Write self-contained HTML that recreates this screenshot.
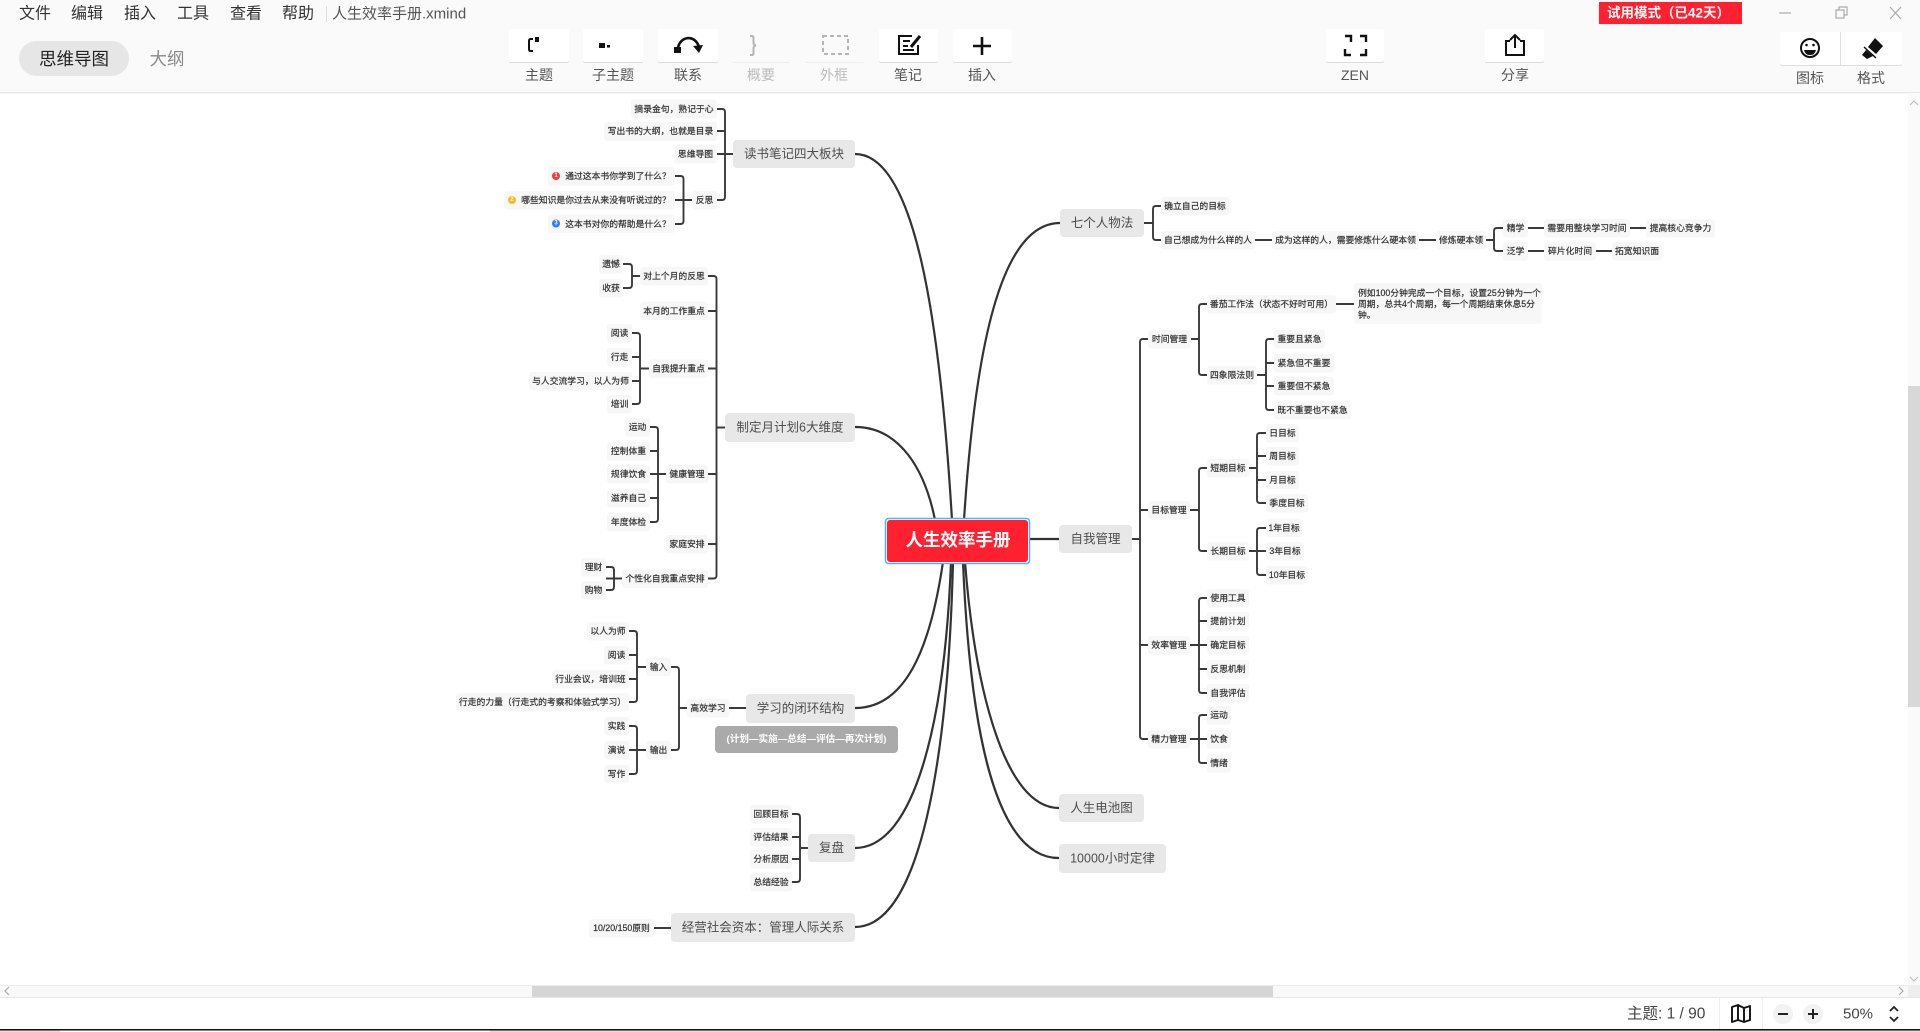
<!DOCTYPE html>
<html lang="zh"><head><meta charset="utf-8"><title>人生效率手册.xmind</title>
<style>
html,body{margin:0;padding:0;background:#fff;overflow:hidden}
svg{display:block}
text{font-family:"Liberation Sans","Noto Sans CJK SC",sans-serif;dominant-baseline:central}
.s{fill:#f7f7f7}
.m{fill:#e8e8e8}
.t{font-size:8.8px;fill:#333;text-anchor:middle;stroke:#333;stroke-width:.2}
.tl{font-size:8.8px;fill:#333;stroke:#333;stroke-width:.2}
.h{font-size:12.5px;fill:#4d4d4d;text-anchor:middle}
.c{fill:none;stroke:#3a3a3a;stroke-width:1.9}
.cv{fill:none;stroke:#333;stroke-width:2.2}
.menu{font-size:16px;fill:#333}
.lab{font-size:14px;fill:#555;text-anchor:middle}
.dis{font-size:14px;fill:#bbb;text-anchor:middle}
.ic{fill:none;stroke:#111;stroke-width:2}
.ig{fill:none;stroke:#b5b5b5;stroke-width:2}
</style></head>
<body>
<svg width="1920" height="1032" viewBox="0 0 1920 1032" xmlns="http://www.w3.org/2000/svg">
<rect width="1920" height="1032" fill="#fff"/>
<!-- toolbar -->
<rect width="1920" height="92" fill="#fafafa"/>
<rect y="92" width="1920" height="1.5" fill="#e8e8e8"/>
<text class="menu" x="19" y="14">文件</text>
<text class="menu" x="71" y="14">编辑</text>
<text class="menu" x="124" y="14">插入</text>
<text class="menu" x="177" y="14">工具</text>
<text class="menu" x="230" y="14">查看</text>
<text class="menu" x="282" y="14">帮助</text>
<rect x="326" y="6" width="1" height="16" fill="#ddd"/>
<text x="332" y="14" font-size="15" fill="#555">人生效率手册.xmind</text>
<rect x="19" y="41" width="110" height="35" rx="17.5" fill="#e6e6e6"/>
<text x="74" y="59" font-size="17.5" fill="#222" text-anchor="middle">思维导图</text>
<text x="167" y="59" font-size="17.5" fill="#8a8a8a" text-anchor="middle">大纲</text>
<!-- buttons -->
<g fill="#ddd">
<rect x="509" y="31" width="60" height="32" rx="2"/><rect x="583" y="31" width="60" height="32" rx="2"/><rect x="658" y="31" width="60" height="32" rx="2"/>
<rect x="879" y="31" width="59" height="32" rx="2"/><rect x="953" y="31" width="59" height="32" rx="2"/><rect x="1326" y="31" width="58" height="32" rx="2"/><rect x="1485" y="31" width="59" height="32" rx="2"/><rect x="1780" y="34" width="122" height="32" rx="2"/>
</g>
<g fill="#eee"><rect x="732" y="31" width="58" height="32" rx="2"/><rect x="805" y="31" width="59" height="32" rx="2"/></g>
<g fill="#fff">
<rect x="509" y="29" width="60" height="33" rx="2"/><rect x="583" y="29" width="60" height="33" rx="2"/><rect x="658" y="29" width="60" height="33" rx="2"/>
<rect x="879" y="29" width="59" height="33" rx="2"/><rect x="953" y="29" width="59" height="33" rx="2"/><rect x="1326" y="29" width="58" height="33" rx="2"/><rect x="1485" y="29" width="59" height="33" rx="2"/><rect x="1780" y="32" width="122" height="33" rx="2"/>
</g>
<g fill="#fafafa"><rect x="732" y="29" width="58" height="33" rx="2"/><rect x="805" y="29" width="59" height="33" rx="2"/></g>
<rect x="1840" y="32" width="1" height="33" fill="#ddd"/>
<!-- icons -->
<path class="ic" d="M533 39H530.5Q529 39 529 41V49Q529 51 530.5 51H533"/><rect x="535" y="37" width="4" height="5" fill="#111"/>
<rect x="599" y="43" width="6" height="5" fill="#111"/><rect x="607" y="45" width="3" height="2.500" fill="#111"/>
<path d="M678 48C680 36 695 34 699 47" fill="none" stroke="#111" stroke-width="2.600"/><rect x="674" y="47" width="7" height="6" fill="#111"/><path d="M693 46L703 45L699 53Z" fill="#111"/>
<path class="ig" d="M750 36H752Q753.500 36 753.500 38V43Q753.500 45 756 45.500Q753.500 46 753.500 48V53Q753.500 55 752 55H750"/>
<rect x="823" y="36" width="25" height="18" class="ig" stroke-dasharray="4 3"/>
<path class="ic" d="M912 36H899V54H918V45"/><path class="ic" d="M903 41H910M903 46H908M903 50H914"/><path d="M911 47L920 36" stroke="#111" stroke-width="3"/>
<path d="M982 37V55M973 46H991" stroke="#111" stroke-width="2.600"/>
<path class="ic" style="stroke-width:2.400" d="M1351 42V36H1345M1360 36H1366V42M1366 49V55H1360M1351 55H1345V49"/>
<path class="ic" d="M1510 41H1506V55H1524V41H1520"/><path class="ic" d="M1515 48V35M1510 40L1515 35L1520 40"/>
<circle cx="1810" cy="48" r="9" class="ic"/><circle cx="1806.500" cy="45" r="1.300" fill="#111"/><circle cx="1813.500" cy="45" r="1.300" fill="#111"/><path d="M1804 50H1816Q1815 55 1810 55Q1805 55 1804 50Z" fill="#111"/>
<path d="M1868 47L1875 38L1883 46L1876 54Z" fill="#111"/><path d="M1866 50L1873 56L1867 59L1862 55Z" fill="#111"/><path d="M1864 47L1876 58" stroke="#111" stroke-width="1.500"/>
<text class="lab" x="539" y="75">主题</text><text class="lab" x="613" y="75">子主题</text><text class="lab" x="688" y="75">联系</text>
<text class="dis" x="761" y="75">概要</text><text class="dis" x="834" y="75">外框</text>
<text class="lab" x="908" y="75">笔记</text><text class="lab" x="982" y="75">插入</text>
<text class="lab" x="1355" y="75">ZEN</text><text class="lab" x="1515" y="75">分享</text>
<text class="lab" x="1810" y="78">图标</text><text class="lab" x="1871" y="78">格式</text>
<rect x="1599" y="2" width="143" height="22" fill="#ff2030"/>
<text x="1607" y="13" font-size="13.500" font-weight="bold" fill="#fff">试用模式（已42天）</text>
<path d="M1779 13H1791" stroke="#aaa" stroke-width="1.200"/>
<path d="M1836 10H1844V18H1836ZM1839 10V7H1847V15H1844" fill="none" stroke="#aaa" stroke-width="1.200"/>
<path d="M1890 7L1901 19M1901 7L1890 19" stroke="#aaa" stroke-width="1.200"/>
<!-- curves -->
<path class="cv" d="M952 520C940 320 915 154 855 154"/>
<path class="cv" d="M935 520C925 470 900 427 855 427"/>
<path class="cv" d="M943 562C930 650 905 708 855 708"/>
<path class="cv" d="M951 562C945 720 915 848 855 848"/>
<path class="cv" d="M953 562C948 760 920 927 855 927"/>
<path class="cv" d="M964 520C975 350 1000 223 1060 223"/>
<path class="cv" d="M965 562C975 690 1005 808 1059 808"/>
<path class="cv" d="M963 562C970 730 995 858 1059 858"/>
<path d="M1029 539H1059" stroke="#333" stroke-width="2.200"/>
<!-- connectors -->
<path class="c" d="M717 109H722Q725 109 725 112V197Q725 200 722 200H717M717 131H725M717 154H733"/>
<path class="c" d="M675 176H680.500Q683.500 176 683.500 179V221Q683.500 224 680.500 224H675M675 200H692"/>
<path class="c" d="M708 276H713.500Q716.500 276 716.500 279V575.500Q716.500 578.500 713.500 578.500H708M708 311H716.500M708 368.500H716.500M708 474H716.500M708 544H716.500M716.500 427.500H725"/>
<path class="c" d="M623 264H629Q632 264 632 267V285Q632 288 629 288H623M632 276H640"/>
<path class="c" d="M632 333H637Q640 333 640 336V401Q640 404 637 404H632M632 357H640M632 381H640M640 368.500H649"/>
<path class="c" d="M650 427H655Q658 427 658 430V519Q658 522 655 522H650M650 451H658M650 474H666M650 498H658"/>
<path class="c" d="M606 567H611Q614 567 614 570V587Q614 590 611 590H606M606 578.500H622"/>
<path class="c" d="M671 667H676Q679 667 679 670V747Q679 750 676 750H671M679 708H687M729 708H746"/>
<path class="c" d="M629 631H634Q637 631 637 634V699Q637 702 634 702H629M629 655H637M629 679H637M637 667H646"/>
<path class="c" d="M629 726H634Q637 726 637 729V771Q637 774 634 774H629M629 750H646"/>
<path class="c" d="M792 814H797Q800 814 800 817V879Q800 882 797 882H792M792 837H800M792 859H800M800 848H808M654 928H671"/>
<path class="c" d="M1161 206H1156Q1153 206 1153 209V237Q1153 240 1156 240H1161M1144 223H1153M1255 240H1272M1419 240H1436"/>
<path class="c" d="M1503 228H1497Q1494 228 1494 231V248Q1494 251 1497 251H1503M1486 240H1494M1528 228H1544M1630 228H1646M1528 251H1544M1596 251H1612"/>
<path class="c" d="M1148 339H1143Q1140 339 1140 342V736Q1140 739 1143 739H1148M1148 510H1140M1148 645H1140M1132 539H1140"/>
<path class="c" d="M1207 304H1202Q1199 304 1199 307V372Q1199 375 1202 375H1207M1191 339H1199M1336 304H1354"/>
<path class="c" d="M1274 339H1269Q1266 339 1266 342V407Q1266 410 1269 410H1274M1274 363H1266M1274 386H1266M1257 375H1266"/>
<path class="c" d="M1207 468H1202Q1199 468 1199 471V548Q1199 551 1202 551H1207M1190 510H1199"/>
<path class="c" d="M1266 433H1260Q1257 433 1257 436V500Q1257 503 1260 503H1266M1266 456H1257M1266 480H1257M1249 468H1257"/>
<path class="c" d="M1266 528H1260Q1257 528 1257 531V572Q1257 575 1260 575H1266M1249 551H1266"/>
<path class="c" d="M1207 598H1202Q1199 598 1199 601V690Q1199 693 1202 693H1207M1207 621H1199M1190 645H1207M1207 669H1199"/>
<path class="c" d="M1207 715H1202Q1199 715 1199 718V760Q1199 763 1202 763H1207M1190 739H1207"/>
<!-- main nodes -->
<rect class="m" x="733" y="140" width="122" height="28" rx="4"/><text class="h" x="794" y="154">读书笔记四大板块</text>
<rect class="m" x="725" y="413" width="130" height="29" rx="4"/><text class="h" x="790" y="427.500">制定月计划6大维度</text>
<rect class="m" x="746" y="694" width="109" height="29" rx="4"/><text class="h" x="800.500" y="708.500">学习的闭环结构</text>
<rect x="715" y="726" width="183" height="27" rx="4" fill="#aaa"/><text x="806.500" y="739.500" font-size="9.600" font-weight="bold" fill="#fff" text-anchor="middle">(计划—实施—总结—评估—再次计划)</text>
<rect class="m" x="808" y="834" width="47" height="28" rx="4"/><text class="h" x="831.500" y="848">复盘</text>
<rect class="m" x="671" y="913" width="184" height="29" rx="4"/><text class="h" x="763" y="927.500">经营社会资本：管理人际关系</text>
<rect class="m" x="1060" y="209" width="84" height="28" rx="4"/><text class="h" x="1102" y="223">七个人物法</text>
<rect class="m" x="1059" y="525" width="73" height="28" rx="4"/><text class="h" x="1095.500" y="539">自我管理</text>
<rect class="m" x="1059" y="794" width="85" height="28" rx="4"/><text class="h" x="1101.500" y="808">人生电池图</text>
<rect class="m" x="1059" y="844" width="107" height="29" rx="4"/><text class="h" x="1112.500" y="858.500">10000小时定律</text>
<!-- center -->
<rect x="885.500" y="518.500" width="144" height="45" rx="3" fill="#fff" stroke="#3bbcff" stroke-width="1.500"/>
<rect x="887" y="520" width="141" height="42" rx="3" fill="#ff2030"/>
<text x="958" y="540" font-size="17.500" font-weight="bold" fill="#fff" text-anchor="middle">人生效率手册</text>
<!-- small nodes left -->
<rect class="s" x="631" y="99.500" width="86" height="19" rx="3"/><text class="t" x="674" y="109">摘录金句，熟记于心</text>
<rect class="s" x="604" y="122" width="113" height="19" rx="3"/><text class="t" x="660.500" y="131">写出书的大纲，也就是目录</text>
<rect class="s" x="674" y="145" width="43" height="18.500" rx="3"/><text class="t" x="695.500" y="154">思维导图</text>
<rect class="s" x="692" y="191" width="25" height="18.500" rx="3"/><text class="t" x="704.500" y="200">反思</text>
<rect class="s" x="548" y="167" width="127" height="18.500" rx="3"/><text class="t" x="618" y="176">通过这本书你学到了什么？</text>
<circle cx="556" cy="176" r="4" fill="#f03c3c"/><text x="556" y="176" font-size="6" font-weight="bold" fill="#fff" text-anchor="middle">1</text>
<rect class="s" x="504" y="191" width="171" height="18.500" rx="3"/><text class="t" x="596" y="200">哪些知识是你过去从来没有听说过的？</text>
<circle cx="512" cy="200" r="4" fill="#fdb813"/><text x="512" y="200" font-size="6" font-weight="bold" fill="#fff" text-anchor="middle">2</text>
<rect class="s" x="548" y="214.500" width="127" height="18.500" rx="3"/><text class="t" x="618" y="224">这本书对你的帮助是什么？</text>
<circle cx="556" cy="223.500" r="4" fill="#2a7fff"/><text x="556" y="223.500" font-size="6" font-weight="bold" fill="#fff" text-anchor="middle">3</text>
<rect class="s" x="640" y="267" width="68" height="18.500" rx="3"/><text class="t" x="674" y="276">对上个月的反思</text>
<rect class="s" x="640" y="301.500" width="68" height="18.500" rx="3"/><text class="t" x="674" y="311">本月的工作重点</text>
<rect class="s" x="649" y="359.500" width="59" height="18.500" rx="3"/><text class="t" x="678.500" y="368.500">自我提升重点</text>
<rect class="s" x="666" y="465" width="42" height="18.500" rx="3"/><text class="t" x="687" y="474">健康管理</text>
<rect class="s" x="666" y="535" width="42" height="18.500" rx="3"/><text class="t" x="687" y="544">家庭安排</text>
<rect class="s" x="622" y="569.500" width="86" height="18.500" rx="3"/><text class="t" x="665" y="578.500">个性化自我重点安排</text>
<rect class="s" x="599" y="255" width="24" height="18.500" rx="3"/><text class="t" x="611" y="264">遗憾</text>
<rect class="s" x="599" y="279" width="24" height="18.500" rx="3"/><text class="t" x="611" y="288">收获</text>
<rect class="s" x="607" y="324" width="25" height="18.500" rx="3"/><text class="t" x="619.500" y="333">阅读</text>
<rect class="s" x="607" y="348" width="25" height="18.500" rx="3"/><text class="t" x="619.500" y="357">行走</text>
<rect class="s" x="529" y="372" width="103" height="18.500" rx="3"/><text class="t" x="580.500" y="381">与人交流学习，以人为师</text>
<rect class="s" x="607" y="395" width="25" height="18.500" rx="3"/><text class="t" x="619.500" y="404">培训</text>
<rect class="s" x="625" y="418" width="25" height="18.500" rx="3"/><text class="t" x="637.500" y="427">运动</text>
<rect class="s" x="607" y="442" width="43" height="18.500" rx="3"/><text class="t" x="628.500" y="451">控制体重</text>
<rect class="s" x="607" y="465" width="43" height="18.500" rx="3"/><text class="t" x="628.500" y="474">规律饮食</text>
<rect class="s" x="607" y="489" width="43" height="18.500" rx="3"/><text class="t" x="628.500" y="498">滋养自己</text>
<rect class="s" x="607" y="513" width="43" height="18.500" rx="3"/><text class="t" x="628.500" y="522">年度体检</text>
<rect class="s" x="581" y="558" width="25" height="18.500" rx="3"/><text class="t" x="593.500" y="567">理财</text>
<rect class="s" x="581" y="581" width="25" height="18.500" rx="3"/><text class="t" x="593.500" y="590">购物</text>
<rect class="s" x="687" y="699" width="42" height="18.500" rx="3"/><text class="t" x="708" y="708">高效学习</text>
<rect class="s" x="646" y="657.500" width="25" height="18.500" rx="3"/><text class="t" x="658.500" y="667">输入</text>
<rect class="s" x="646" y="741" width="25" height="18.500" rx="3"/><text class="t" x="658.500" y="750">输出</text>
<rect class="s" x="587" y="622" width="42" height="18.500" rx="3"/><text class="t" x="608" y="631">以人为师</text>
<rect class="s" x="604" y="646" width="25" height="18.500" rx="3"/><text class="t" x="616.500" y="655">阅读</text>
<rect class="s" x="552" y="670" width="77" height="18.500" rx="3"/><text class="t" x="590.500" y="679">行业会议，培训班</text>
<rect class="s" x="456" y="693" width="173" height="18.500" rx="3"/><text class="t" x="542.500" y="702">行走的力量（行走式的考察和体验式学习）</text>
<rect class="s" x="604" y="717" width="25" height="18.500" rx="3"/><text class="t" x="616.500" y="726">实践</text>
<rect class="s" x="604" y="741" width="25" height="18.500" rx="3"/><text class="t" x="616.500" y="750">演说</text>
<rect class="s" x="604" y="765" width="25" height="18.500" rx="3"/><text class="t" x="616.500" y="774">写作</text>
<rect class="s" x="750" y="805" width="42" height="18.500" rx="3"/><text class="t" x="771" y="814">回顾目标</text>
<rect class="s" x="750" y="828" width="42" height="18.500" rx="3"/><text class="t" x="771" y="837">评估结果</text>
<rect class="s" x="750" y="850" width="42" height="18.500" rx="3"/><text class="t" x="771" y="859">分析原因</text>
<rect class="s" x="750" y="873" width="42" height="18.500" rx="3"/><text class="t" x="771" y="882">总结经验</text>
<rect class="s" x="589" y="919" width="65" height="18.500" rx="3"/><text class="t" x="621.500" y="928">10/20/150原则</text>
<!-- small nodes right -->
<rect class="s" x="1161" y="197" width="68" height="18.500" rx="3"/><text class="t" x="1195" y="206">确立自己的目标</text>
<rect class="s" x="1161" y="231" width="94" height="18.500" rx="3"/><text class="t" x="1208" y="240">自己想成为什么样的人</text>
<rect class="s" x="1272" y="231" width="147" height="18.500" rx="3"/><text class="t" x="1345.500" y="240">成为这样的人，需要修炼什么硬本领</text>
<rect class="s" x="1436" y="231" width="50" height="18.500" rx="3"/><text class="t" x="1461" y="240">修炼硬本领</text>
<rect class="s" x="1503" y="219" width="25" height="18.500" rx="3"/><text class="t" x="1515.500" y="228">精学</text>
<rect class="s" x="1503" y="242" width="25" height="18.500" rx="3"/><text class="t" x="1515.500" y="251">泛学</text>
<rect class="s" x="1544" y="219" width="86" height="18.500" rx="3"/><text class="t" x="1587" y="228">需要用整块学习时间</text>
<rect class="s" x="1646" y="219" width="69" height="18.500" rx="3"/><text class="t" x="1680.500" y="228">提高核心竞争力</text>
<rect class="s" x="1544" y="242" width="52" height="18.500" rx="3"/><text class="t" x="1570" y="251">碎片化时间</text>
<rect class="s" x="1612" y="242" width="50" height="18.500" rx="3"/><text class="t" x="1637" y="251">拓宽知识面</text>
<rect class="s" x="1148" y="330" width="43" height="18.500" rx="3"/><text class="t" x="1169.500" y="339">时间管理</text>
<rect class="s" x="1207" y="295" width="129" height="18.500" rx="3"/><text class="t" x="1271.500" y="304">番茄工作法（状态不好时可用）</text>
<rect class="s" x="1354" y="283" width="188" height="41" rx="3"/>
<text class="tl" x="1358" y="293">例如100分钟完成一个目标，设置25分钟为一个</text>
<text class="tl" x="1358" y="304">周期，总共4个周期，每一个周期结束休息5分</text>
<text class="tl" x="1358" y="315">钟。</text>
<rect class="s" x="1207" y="366" width="50" height="18.500" rx="3"/><text class="t" x="1232" y="375">四象限法则</text>
<rect class="s" x="1274" y="330" width="51" height="18.500" rx="3"/><text class="t" x="1299.500" y="339">重要且紧急</text>
<rect class="s" x="1274" y="354" width="60" height="18.500" rx="3"/><text class="t" x="1304" y="363">紧急但不重要</text>
<rect class="s" x="1274" y="377" width="60" height="18.500" rx="3"/><text class="t" x="1304" y="386">重要但不紧急</text>
<rect class="s" x="1274" y="401" width="77" height="18.500" rx="3"/><text class="t" x="1312.500" y="410">既不重要也不紧急</text>
<rect class="s" x="1148" y="501" width="42" height="18.500" rx="3"/><text class="t" x="1169" y="510">目标管理</text>
<rect class="s" x="1207" y="459" width="42" height="18.500" rx="3"/><text class="t" x="1228" y="468">短期目标</text>
<rect class="s" x="1207" y="542" width="42" height="18.500" rx="3"/><text class="t" x="1228" y="551">长期目标</text>
<rect class="s" x="1266" y="424" width="33" height="18.500" rx="3"/><text class="t" x="1282.500" y="433">日目标</text>
<rect class="s" x="1266" y="447" width="33" height="18.500" rx="3"/><text class="t" x="1282.500" y="456">周目标</text>
<rect class="s" x="1266" y="471" width="33" height="18.500" rx="3"/><text class="t" x="1282.500" y="480">月目标</text>
<rect class="s" x="1266" y="494" width="42" height="18.500" rx="3"/><text class="t" x="1287" y="503">季度目标</text>
<rect class="s" x="1266" y="519" width="36" height="18.500" rx="3"/><text class="t" x="1284" y="528">1年目标</text>
<rect class="s" x="1266" y="542" width="38" height="18.500" rx="3"/><text class="t" x="1285" y="551">3年目标</text>
<rect class="s" x="1266" y="566" width="42" height="18.500" rx="3"/><text class="t" x="1287" y="575">10年目标</text>
<rect class="s" x="1148" y="636" width="42" height="18.500" rx="3"/><text class="t" x="1169" y="645">效率管理</text>
<rect class="s" x="1207" y="589" width="42" height="18.500" rx="3"/><text class="t" x="1228" y="598">使用工具</text>
<rect class="s" x="1207" y="612" width="42" height="18.500" rx="3"/><text class="t" x="1228" y="621">提前计划</text>
<rect class="s" x="1207" y="636" width="42" height="18.500" rx="3"/><text class="t" x="1228" y="645">确定目标</text>
<rect class="s" x="1207" y="660" width="42" height="18.500" rx="3"/><text class="t" x="1228" y="669">反思机制</text>
<rect class="s" x="1207" y="684" width="42" height="18.500" rx="3"/><text class="t" x="1228" y="693">自我评估</text>
<rect class="s" x="1148" y="730" width="42" height="18.500" rx="3"/><text class="t" x="1169" y="739">精力管理</text>
<rect class="s" x="1207" y="706" width="24" height="18.500" rx="3"/><text class="t" x="1219" y="715">运动</text>
<rect class="s" x="1207" y="730" width="24" height="18.500" rx="3"/><text class="t" x="1219" y="739">饮食</text>
<rect class="s" x="1207" y="754" width="24" height="18.500" rx="3"/><text class="t" x="1219" y="763">情绪</text>
<!-- scrollbars -->
<rect x="1908" y="93" width="12" height="892" fill="#fafafa"/>
<rect x="1908" y="386" width="12" height="321" fill="#d8d8d8"/>
<path d="M1910 105L1914 101L1918 105M1910 977L1914 981L1918 977" fill="none" stroke="#bbb" stroke-width="1"/>
<rect y="985" width="1908" height="12" fill="#f9f9f9"/>
<rect y="985" width="1908" height="1" fill="#ececec"/><rect y="997" width="1920" height="1" fill="#e8e8e8"/>
<rect x="532" y="986" width="741" height="11" fill="#d6d6d6"/>
<rect x="1908" y="985" width="12" height="12" fill="#eee"/>
<path d="M9 987L5 991L9 995M1899 987L1903 991L1899 995" fill="none" stroke="#aaa" stroke-width="1.200"/>
<!-- status -->
<text x="1627" y="1014" font-size="15.500" fill="#444">主题: 1 / 90</text>
<rect x="1719" y="998" width="1" height="31" fill="#eee"/><rect x="1762" y="998" width="1" height="31" fill="#eee"/>
<path d="M1732 1007L1738 1005L1744 1008L1750 1006V1020L1744 1022L1738 1020L1732 1022ZM1738 1005V1020M1744 1008V1022" fill="none" stroke="#111" stroke-width="1.900" stroke-linejoin="round"/>
<circle cx="1783" cy="1014" r="10" fill="#f2f2f2"/><path d="M1778 1014H1788" stroke="#222" stroke-width="2"/>
<circle cx="1813" cy="1014" r="10" fill="#f2f2f2"/><path d="M1808 1014H1818M1813 1009V1019" stroke="#222" stroke-width="2"/>
<text x="1843" y="1014" font-size="15" fill="#444">50%</text>
<path d="M1890 1011L1894 1007L1898 1011M1890 1017L1894 1021L1898 1017" fill="none" stroke="#222" stroke-width="1.800"/>
<rect y="1029" width="1920" height="1.500" fill="#111"/>
<rect y="1030.500" width="60" height="1.500" fill="#e8dcdc"/><rect x="490" y="1030.500" width="1430" height="1.500" fill="#ddd"/>
</svg>
</body></html>
